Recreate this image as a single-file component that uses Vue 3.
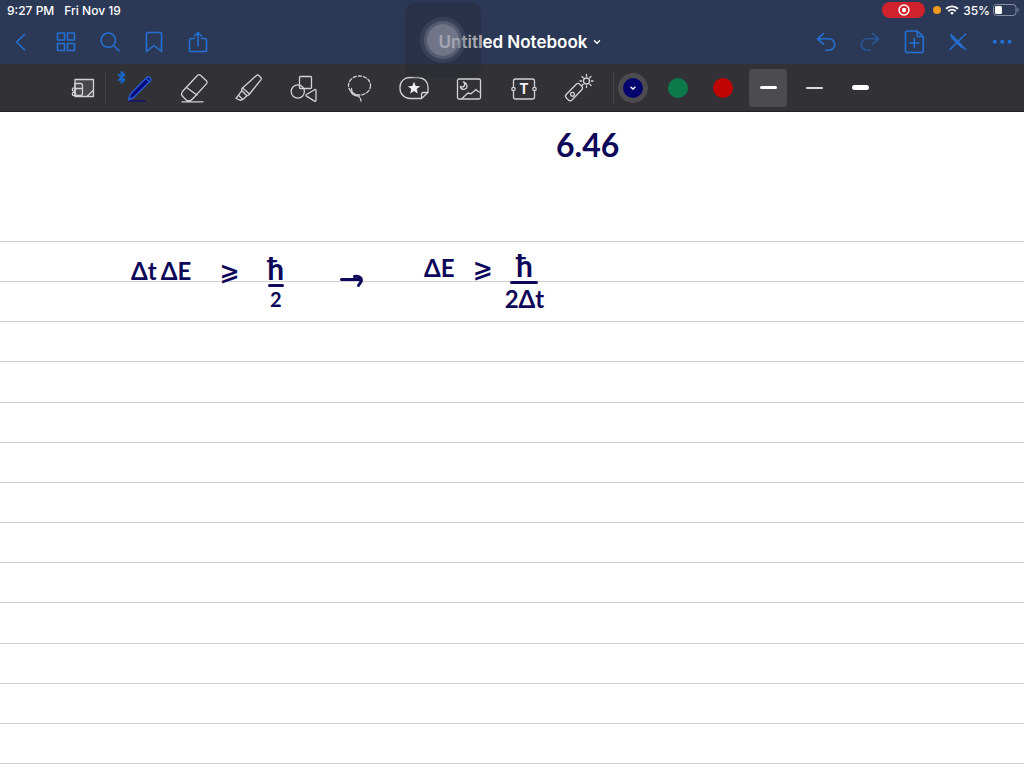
<template>
  <div class="app">
    <header class="top">
      <div class="status">
        <span>9:27 PM</span>
        <span>Fri Nov 19</span>
        <span class="spacer"></span>
        <span class="recording">
          <svg width="14" height="14" viewBox="0 0 14 14">
            <circle cx="7" cy="7" r="5" fill="none" stroke="#fff" stroke-width="1.4" />
            <circle cx="7" cy="7" r="2.2" fill="#fff" />
          </svg>
        </span>
        <span class="mic-dot"></span>
        <svg class="wifi" width="14" height="10" viewBox="0 0 14 10" fill="none" stroke="#fff" stroke-width="1.9">
          <path d="M1 3.8a8.6 8.6 0 0 1 12 0M3.3 6.2a5.3 5.3 0 0 1 7.4 0" />
          <path d="M7 9.8 5.1 7.9a2.7 2.7 0 0 1 3.8 0z" fill="#fff" stroke="none" />
        </svg>
        <span class="percent">35%</span>
        <svg width="26" height="12" viewBox="0 0 26 12">
          <rect x="0.5" y="0.5" width="22.5" height="11" rx="3" fill="none" stroke="#8690a5" />
          <rect x="2" y="2" width="7" height="8" rx="1.5" fill="#fff" />
          <path d="M24.5 4v4c1.6-.8 1.6-3.2 0-4z" fill="#8690a5" />
        </svg>
      </div>

      <nav class="nav">
        <div class="nav-group">
          <button v-for="item in leftActions" :key="item.label" :aria-label="item.label" class="nav-button">
            <svg width="24" height="24" viewBox="0 0 24 24"><path :d="item.path" /></svg>
          </button>
        </div>
        <button class="title">
          Untitled Notebook
          <svg width="8" height="8" viewBox="0 0 8 8"><path d="M1.500 2.800 4 5.200 6.500 2.800" /></svg>
        </button>
        <div class="nav-group end">
          <button
            v-for="item in rightActions"
            :key="item.label"
            :aria-label="item.label"
            :disabled="item.disabled"
            class="nav-button"
          >
            <svg width="24" height="24" viewBox="0 0 24 24">
              <path :d="item.path" :class="{ solid: item.solid }" />
            </svg>
          </button>
        </div>
      </nav>
    </header>

    <div class="toolbar">
      <button class="tool zoom-tool" aria-label="Zoom window">
        <svg width="32" height="32" viewBox="0 0 32 32">
          <path d="M8 7.500h18.500v17H8z" fill="#48484a" />
          <path d="M8 11.500h5.500q2 0 2 2v8q0 2-2 2H8zM8 16.500h7.500M20 24.500l6.500-6.500" />
          <circle cx="7" cy="17.500" r="1.700" />
          <circle cx="7" cy="22" r="1.700" />
        </svg>
      </button>
      <span class="divider"></span>

      <div class="tools">
        <button class="tool" aria-label="Pen">
          <svg width="48" height="40" viewBox="2 0 48 40">
            <path d="M5.500 6.500l6 5.500-3 2.800V4l3 2.800-6 5.500" stroke="#1767cc" stroke-width="1.800" />
            <path d="M16 33h16" stroke="#11116c" stroke-width="1.500" />
            <path d="M15.500 32l2-6L33.500 9.700q1.800-1.600 3.500 0 1.600 1.700 0 3.500L20.500 29.500z" fill="#08087c" stroke="#245ccc" stroke-width="1.500" />
            <path d="M33 10.500l3.500 3.500" stroke="#245ccc" />
          </svg>
        </button>
        <button class="tool" aria-label="Eraser">
          <svg width="32" height="32" viewBox="0 0 32 32">
            <path d="M4.500 19.500 19.600 3.300q1.400-1.300 2.800 0l6 5.400q1.500 1.400.2 2.900L15 26.500q-2 2.500-4.400 2.500-1.400 0-2.600-1.200l-3-3q-2.600-2.300-.5-5.300zM8.500 15.500l10.500 7.500M4 29.800h21" />
          </svg>
        </button>
        <button class="tool" aria-label="Highlighter">
          <svg width="32" height="32" viewBox="0 0 32 32">
            <path d="M9.500 16 23.500 3.500q1.200-1 2.300 0l2 2q1 1 .1 2.300L16.500 22z" />
            <path d="M9.500 16q-1.300 1.200-.7 2.700l-3.300 4.500 4.300 4.200 4.200-3.700q1.500.1 2.500-1.700M8.800 18.700l5.200 5M5.500 23.200 3 26.500l4.500 1.800 2.300-.9" />
          </svg>
        </button>
        <button class="tool" aria-label="Shapes">
          <svg width="32" height="32" viewBox="0 0 32 32">
            <rect x="11.500" y="4.500" width="12" height="12" rx="1" />
            <circle cx="9.800" cy="19.500" r="6.600" />
            <path d="M18.500 22.500q-1.200.8 0 1.600l8 5q1.500.6 1.500-1V18.500q0-1.500-1.500-.8z" />
          </svg>
        </button>
        <button class="tool" aria-label="Lasso">
          <svg width="32" height="32" viewBox="0 0 32 32">
            <ellipse cx="16.500" cy="13.500" rx="11" ry="9.500" stroke-dasharray="3.200 2" />
            <path d="M8.500 16.500c0 8 9 5 9.500 12.500M8 20c1.500 3 3.500 3.500 6.500 4" stroke-dasharray="3.200 1.500" />
          </svg>
        </button>
        <button class="tool" aria-label="Elements">
          <svg width="32" height="32" viewBox="0 0 32 32">
            <path d="M12 5.500h8.500a9.500 9.500 0 0 1 9.500 9.500v5.500l-6.500 6H12A10 10 0 0 1 2 16.500V15a9.500 9.500 0 0 1 10-9.500zM23.500 26.500v-4q0-2 2-2H30" />
            <path class="solid" d="M16 9.700l1.700 4.200 4.500.3-3.500 2.900 1.100 4.400-3.800-2.400-3.800 2.400 1.100-4.400-3.500-2.900 4.500-.3z" />
          </svg>
        </button>
        <button class="tool" aria-label="Image">
          <svg width="32" height="32" viewBox="0 0 32 32">
            <rect x="4.500" y="7" width="23" height="20" rx="1.500" />
            <path d="M10.500 9.800c3.200 3.500-.2 6-3.200 4.700 1 4.500 8 3.200 6.500-1.500-.5-1.800-1.800-2.900-3.300-3.200zM9 26.500l6-5.500 3 .8 5-4.300 2 2 2.500.8" />
          </svg>
        </button>
        <button class="tool" aria-label="Text">
          <svg width="32" height="32" viewBox="0 0 32 32">
            <path d="M5.500 14.500V9q0-2 2-2h17q2 0 2 2v5.500M5.500 19.500V25q0 2 2 2h17q2 0 2-2v-5.500" />
            <circle cx="5.500" cy="17" r="1.700" />
            <circle cx="26.500" cy="17" r="1.700" />
            <text x="16" y="22" text-anchor="middle">T</text>
          </svg>
        </button>
        <button class="tool" aria-label="Laser pointer">
          <svg width="32" height="32" viewBox="0 0 32 32">
            <path d="M3.200 22.500 13.500 12q1.500-1.200 3 0l2.500 2.500q1.300 1.500 0 3L9 28q-1.800 1.600-3.500 0l-2.300-2.300q-1.500-1.500 0-3.200z" />
            <circle cx="9.500" cy="22.200" r="1.900" />
            <circle cx="23.500" cy="9" r="3" />
            <path d="M23.500 2.500v1.700M23.500 13.800v1.700M17 9h1.700M28.300 9H30M19 4.500l1.200 1.200M26.800 12.300l1.200 1.200M28 4.500l-1.200 1.200M20.200 12.300 19 13.500" />
          </svg>
        </button>
      </div>
      <span class="divider"></span>

      <div class="colors">
        <button
          v-for="color in colors"
          :key="color"
          :class="['swatch', color, { selected: color === 'navy' }]"
          :aria-label="color"
        >
          <span class="dot">
            <svg v-if="color === 'navy'" width="8" height="8" viewBox="0 0 8 8"><path d="M2 3.200 4 5 6 3.200" /></svg>
          </span>
        </button>
      </div>
      <div class="strokes">
        <button
          v-for="weight in weights"
          :key="weight"
          :class="['stroke', { selected: weight === 'medium' }]"
          :aria-label="weight"
        >
          <span :class="['line', weight]"></span>
        </button>
      </div>
    </div>

    <main class="paper">
      <div class="rules">
        <div v-for="n in 13" :key="n" class="rule"></div>
      </div>

      <!-- Ink on the free canvas -->
      <div class="ink problem">6.46</div>
      <div class="ink equation first">
        <span class="product"><span>Δt</span><span>ΔE</span></span>
        <span class="relation">⩾</span>
        <span class="fraction">
          <span class="numerator">ħ</span>
          <span class="bar"></span>
          <span class="denominator">2</span>
        </span>
        <svg class="arrow" width="24" height="16" viewBox="0 0 24 16">
          <path d="M1.500 7.500H20M14.500 4.500c4-.8 7 1 7 3.500 0 2-1.500 3-3 5.500" />
        </svg>
      </div>
      <div class="ink equation second">
        <span>ΔE</span>
        <span class="relation">⩾</span>
        <span class="fraction">
          <span class="numerator">ħ</span>
          <span class="bar wide"></span>
          <span class="denominator">2Δt</span>
        </span>
      </div>
    </main>

    <div class="assistive"><span class="assistive-dot"></span></div>
  </div>
</template>

<script setup>
const leftActions = [
  { label: 'Back', path: 'M14.500 4.500 6.500 12l8 7.800' },
  {
    label: 'Thumbnails',
    path: 'M3.500 3h7v7h-7zM13.500 3h7v7h-7zM3.500 13.500h7v7h-7zM13.500 13.500h7v7h-7z',
  },
  { label: 'Search', path: 'M17.500 10.200a7.200 7.200 0 1 1-14.400 0 7.200 7.200 0 0 1 14.400 0zM15.500 15.500l5.500 5.300' },
  { label: 'Bookmark', path: 'M4.500 3.500q0-1 1-1h13q1 0 1 1v18L12 15.500l-7.500 6z' },
  {
    label: 'Share',
    path: 'M8.500 8.500H5.300q-1.800 0-1.800 1.800v9.400q0 1.800 1.800 1.800h13.400q1.800 0 1.800-1.800v-9.400q0-1.800-1.800-1.800h-3.200M12 16V2.500M8.500 6 12 2.500 15.500 6',
  },
]

const rightActions = [
  { label: 'Undo', path: 'M9.500 3.500 3.500 8.800l6 5.400M3.500 8.800H15a5.300 5.300 0 0 1 0 11.400h-3.500' },
  { label: 'Redo', path: 'M14.500 3.500l6 5.300-6 5.400M20.500 8.800H9a5.300 5.300 0 0 0 0 11.400h3.500', disabled: true },
  {
    label: 'Add page',
    path: 'M5.300 1h10l6 5.500v14.200q0 1.800-1.800 1.800H5.300q-1.800 0-1.800-1.800V2.800Q3.500 1 5.300 1zM15.300 1v5.500h6M12.300 8.500v9M7.800 13h9',
  },
  { label: 'Read only mode', path: 'M4 19.500 16.500 7M17.500 6l1.800-1.800M5 4.500l14.500 15M5 4.500l1 3.500 10 9.500' },
  {
    label: 'More',
    path: 'M4.800 9.800a2 2 0 1 0 0 4 2 2 0 0 0 0-4zM12.200 9.800a2 2 0 1 0 0 4 2 2 0 0 0 0-4zM19.600 9.800a2 2 0 1 0 0 4 2 2 0 0 0 0-4z',
    solid: true,
  },
]

const colors = ['navy', 'green', 'red']
const weights = ['medium', 'thin', 'thick']
</script>

<style>
body {
  margin: 0;
}
</style>

<style scoped>
.app {
  position: relative;
  display: flex;
  flex-direction: column;
  min-height: 100vh;
  overflow: hidden;
  font-family: Inter, "Liberation Sans", sans-serif;
}

button {
  display: flex;
  align-items: center;
  justify-content: center;
  padding: 0;
  border: 0;
  background: none;
  color: inherit;
  font: inherit;
}

svg {
  flex: none;
}

.top {
  background: #2c3956;
  color: #fff;
}

.status {
  display: flex;
  align-items: center;
  height: 20px;
  padding: 0 5px 0 7px;
  font-size: 12px;
  font-weight: 500;
}

.status > span + span {
  margin-left: 10px;
}

.spacer {
  flex: 1;
}

.recording {
  display: flex;
  align-items: center;
  justify-content: center;
  width: 43px;
  height: 16px;
  border-radius: 8px;
  background: #cf222d;
}

.status .mic-dot {
  width: 8px;
  height: 8px;
  margin-left: 8px;
  border-radius: 50%;
  background: #f09a1e;
}

.wifi {
  margin: 0 4px;
}

.percent {
  margin-right: 3px;
}

.nav {
  display: grid;
  grid-template-columns: 1fr auto 1fr;
  height: 44px;
}

.nav-group {
  display: flex;
}

.end {
  justify-content: flex-end;
}

.nav-button {
  width: 44px;
  height: 44px;
}

.nav-button path {
  fill: none;
  stroke: #2470d2;
  stroke-width: 1.6;
  stroke-linecap: round;
  stroke-linejoin: round;
}

.nav-button .solid {
  fill: #2470d2;
  stroke: none;
}

.nav-button:disabled {
  opacity: 0.55;
}

.title {
  gap: 6px;
  padding-left: 16px;
  font-size: 17px;
  font-weight: 600;
}

.title path,
.dot path {
  fill: none;
  stroke: #fff;
  stroke-width: 1.4;
  stroke-linecap: round;
}

.toolbar {
  display: flex;
  align-items: center;
  box-sizing: border-box;
  height: 48px;
  padding-left: 61px;
  border-bottom: 1px solid #232225;
  background: #323135;
}

.tools {
  display: flex;
  margin: 0 7px 0 5px;
}

.tool {
  width: 55px;
  height: 44px;
}

.zoom-tool {
  width: 44px;
}

.tool svg {
  fill: none;
  stroke: #d2d2d4;
  stroke-width: 1.3;
  stroke-linecap: round;
  stroke-linejoin: round;
}

.tool .solid {
  fill: #f2f2f2;
  stroke: none;
}

.tool text {
  fill: #f2f2f2;
  stroke: none;
  font-size: 14px;
  font-weight: 700;
}

.divider {
  width: 1px;
  height: 32px;
  background: #434246;
}

.colors {
  display: flex;
  gap: 15px;
  margin: 0 11px 0 4px;
}

.swatch {
  width: 30px;
  height: 30px;
  border-radius: 50%;
}

.swatch.selected {
  background: #4c4b50;
}

.dot {
  display: flex;
  align-items: center;
  justify-content: center;
  width: 20px;
  height: 20px;
  border-radius: 50%;
}

.navy .dot {
  background: #04046e;
}

.green .dot {
  background: #0c7a4b;
}

.red .dot {
  background: #c00404;
}

.strokes {
  display: flex;
  gap: 8px;
}

.stroke {
  width: 38px;
  height: 38px;
  border-radius: 4px;
}

.stroke.selected {
  background: #4c4b4f;
}

.line {
  width: 17px;
  height: 3px;
  border-radius: 3px;
  background: #fff;
}

.line.thin {
  height: 2px;
  background: #dcdcdc;
}

.line.thick {
  height: 5px;
}

.paper {
  position: relative;
  display: flex;
  flex: 1;
  flex-direction: column;
  min-height: 480px;
  padding: 129px 0 4px;
  box-sizing: border-box;
  background: #fff;
}

.rules {
  display: flex;
  flex: 1;
  flex-direction: column;
  border-top: 1px solid #cfcfd3;
}

.rule {
  flex: 1;
  border-bottom: 1px solid #cfcfd3;
}

.ink {
  position: absolute;
  color: #0d0859;
  font-family: Lato, "Liberation Sans", sans-serif;
  font-weight: 700;
}

.problem {
  top: 12px;
  left: 556px;
  font-size: 32px;
  line-height: 42px;
}

.equation {
  display: flex;
  align-items: baseline;
  font-size: 24px;
  line-height: 24px;
}

.first {
  top: 141px;
  left: 131px;
}

.second {
  top: 138px;
  left: 424px;
}

.product {
  display: flex;
  gap: 4px;
}

.relation {
  font-family: "DejaVu Sans", sans-serif;
}

.first .relation {
  margin: 0 28px;
}

.second .relation {
  margin: 0 12px 0 18px;
}

.fraction {
  display: flex;
  flex-direction: column;
  align-items: center;
}

.numerator {
  font-size: 30px;
  line-height: 30px;
}

.bar {
  width: 16px;
  height: 3px;
  margin: 1px 0;
  border-radius: 2px;
  background: #0d0859;
}

.bar.wide {
  width: 28px;
}

.denominator {
  font-size: 20px;
  line-height: 22px;
}

.second .denominator {
  font-size: 24px;
  line-height: 28px;
}

.arrow {
  align-self: flex-start;
  margin: 19px 0 0 56px;
  fill: none;
  stroke: #0d0859;
  stroke-width: 3;
  stroke-linecap: round;
  stroke-linejoin: round;
}

.assistive {
  position: absolute;
  top: 2px;
  left: 50%;
  display: flex;
  align-items: center;
  justify-content: center;
  width: 76px;
  height: 76px;
  margin-left: -107px;
  border-radius: 10px;
  background: rgba(38, 40, 52, 0.4);
  pointer-events: none;
}

.assistive-dot {
  width: 32px;
  height: 32px;
  border-radius: 50%;
  background: rgba(160, 164, 180, 0.6);
  box-shadow:
    0 0 0 3px rgba(120, 125, 145, 0.45),
    0 0 0 7px rgba(100, 106, 128, 0.25);
}
</style>
